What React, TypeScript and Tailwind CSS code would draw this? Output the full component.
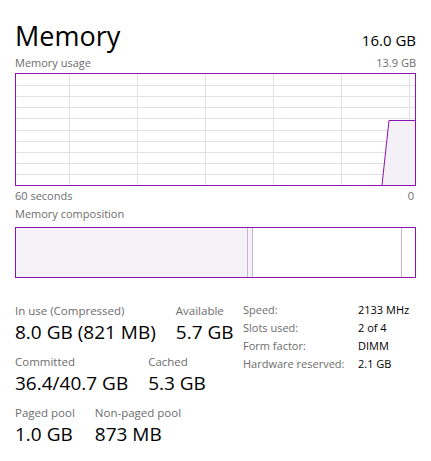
import React from 'react';

const font = { fontFamily: '"Segoe UI", "Open Sans", "Noto Sans", sans-serif' };

function UsageChart() {
  const w = 399;
  const h = 111;
  // page x of each vertical grid line, shifted into the svg
  const vLines = [69, 137, 205, 273, 341, 409];
  const hLines = Array.from({ length: 9 }, (_, i) => Math.round(((i + 1) * h) / 10));
  return (
    <div className="border border-[#8b12ae] w-[401px] h-[113px] mt-[3px]">
      <svg width={w} height={h} className="block">
        {hLines.map((y) => (
          <line key={y} x1={0} x2={w} y1={y + 0.5} y2={y + 0.5} stroke="#e3dfe6" strokeWidth={1} />
        ))}
        {vLines.map((x) => (
          <line key={x} x1={x - 15.5} x2={x - 15.5} y1={0} y2={h} stroke="#e3dfe6" strokeWidth={1} />
        ))}
        <polygon points={`366,${h} 373,46.5 ${w},46.5 ${w},${h}`} fill="#f4f0f7" />
        <polyline points={`366,${h} 373,46.5 ${w},46.5`} fill="none" stroke="#8b12ae" strokeWidth={1} />
      </svg>
    </div>
  );
}

function CompositionBar() {
  return (
    <div className="flex border border-[#8b12ae] w-[401px] h-[51px]">
      <div className="w-[232px] bg-[#f4f2f6] border-r border-[#c9b3d3]" />
      <div className="w-[5px] bg-[#f4f2f6] border-r border-[#c9b3d3]" />
      <div className="flex-1 bg-white border-r border-[#c9b3d3]" />
      <div className="w-[13px] bg-white" />
    </div>
  );
}

function Stat({ label, value }: { label: string; value: string }) {
  return (
    <div className="flex flex-col">
      <span className="text-[11.5px] leading-[16px] text-[#6d6d6d]">{label}</span>
      <span className="text-[19px] leading-[26px] text-black">{value}</span>
    </div>
  );
}

export default function App() {
  const specs = [
    ['Speed:', '2133 MHz'],
    ['Slots used:', '2 of 4'],
    ['Form factor:', 'DIMM'],
    ['Hardware reserved:', '2.1 GB'],
  ];
  return (
    <div className="w-[431px] h-[461px] bg-white px-[15px] pt-[18px]" style={font}>
      <div className="flex items-baseline justify-between w-[401px]">
        <span className="text-[27px] leading-[36px] text-black">Memory</span>
        <span className="text-[15px] text-black">16.0 GB</span>
      </div>
      <div className="flex justify-between w-[401px] text-[11px] leading-[15px] text-[#6d6d6d] mt-[1px]">
        <span>Memory usage</span>
        <span>13.9 GB</span>
      </div>
      <UsageChart />
      <div className="flex justify-between w-[401px] text-[11px] leading-[16px] text-[#6d6d6d] mt-[2px]">
        <span>60 seconds</span>
        <span className="pr-[2px]">0</span>
      </div>
      <div className="text-[11px] leading-[16px] text-[#6d6d6d] mt-[2px] mb-[5px]">Memory composition</div>
      <CompositionBar />
      <div className="flex mt-[25px]">
        <div className="flex flex-col gap-[9px] w-[228px]">
          <div className="flex gap-[20px]">
            <Stat label="In use (Compressed)" value="8.0 GB (821 MB)" />
            <Stat label="Available" value="5.7 GB" />
          </div>
          <div className="flex gap-[20px]">
            <Stat label="Committed" value="36.4/40.7 GB" />
            <Stat label="Cached" value="5.3 GB" />
          </div>
          <div className="flex gap-[20px]">
            <Stat label="Paged pool" value="1.0 GB" />
            <Stat label="Non-paged pool" value="873 MB" />
          </div>
        </div>
        <div className="flex flex-col text-[11px] leading-[18px] -mt-[2px]">
          {specs.map(([k, v]) => (
            <div key={k} className="flex">
              <span className="w-[115px] text-[#6d6d6d]">{k}</span>
              <span className="text-black">{v}</span>
            </div>
          ))}
        </div>
      </div>
    </div>
  );
}
